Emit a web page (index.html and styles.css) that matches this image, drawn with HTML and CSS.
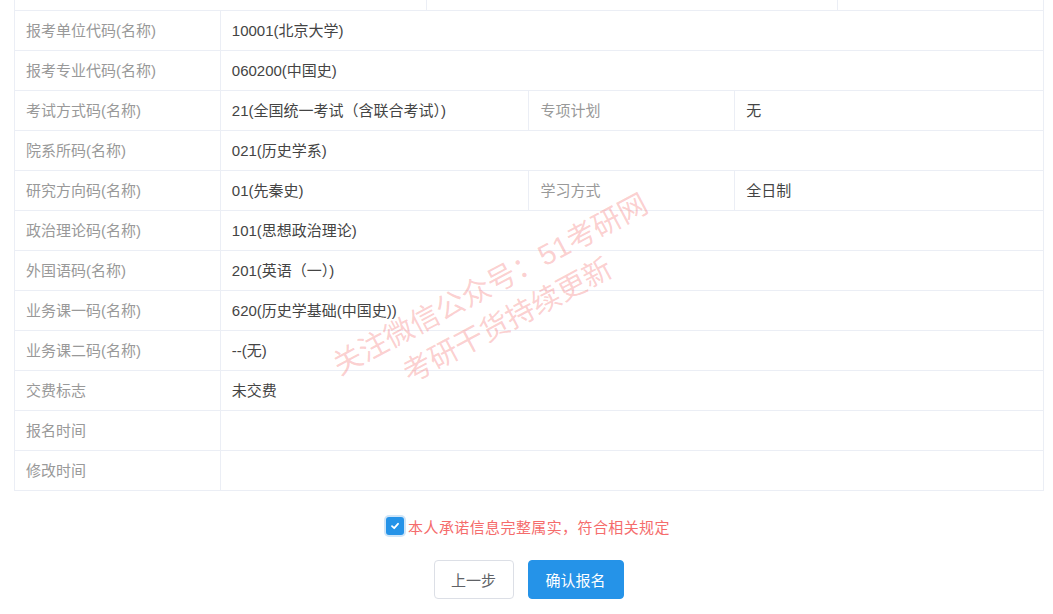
FILE: index.html
```html
<!DOCTYPE html>
<html lang="zh-CN">
<head>
  <meta charset="UTF-8" />
  <meta name="viewport" content="width=device-width, initial-scale=1.0"/>
  <title>报名信息确认</title>
  <link rel="stylesheet" href="styles.css">
</head>
<body>
  <div class="pagina">
    <table class="tabela tabela-topo">
      <tr>
        <td class="c40"></td>
        <td class="c40"></td>
        <td></td>
      </tr>
    </table>

    <table class="tabela info">
      <colgroup>
        <col class="c20"><col class="c30"><col class="c20"><col class="c30">
      </colgroup>
      <tr><td class="rotulo">报考单位代码(名称)</td><td colspan="3">10001(北京大学)</td></tr>
      <tr><td class="rotulo">报考专业代码(名称)</td><td colspan="3">060200(中国史)</td></tr>
      <tr>
        <td class="rotulo">考试方式码(名称)</td><td>21(全国统一考试（含联合考试）)</td>
        <td class="rotulo">专项计划</td><td>无</td>
      </tr>
      <tr><td class="rotulo">院系所码(名称)</td><td colspan="3">021(历史学系)</td></tr>
      <tr>
        <td class="rotulo">研究方向码(名称)</td><td>01(先秦史)</td>
        <td class="rotulo">学习方式</td><td>全日制</td>
      </tr>
      <tr><td class="rotulo">政治理论码(名称)</td><td colspan="3">101(思想政治理论)</td></tr>
      <tr><td class="rotulo">外国语码(名称)</td><td colspan="3">201(英语（一）)</td></tr>
      <tr><td class="rotulo">业务课一码(名称)</td><td colspan="3">620(历史学基础(中国史))</td></tr>
      <tr><td class="rotulo">业务课二码(名称)</td><td colspan="3">--(无)</td></tr>
      <tr><td class="rotulo">交费标志</td><td colspan="3">未交费</td></tr>
      <tr><td class="rotulo">报名时间</td><td colspan="3"></td></tr>
      <tr><td class="rotulo">修改时间</td><td colspan="3"></td></tr>
    </table>

    <label class="promessa">
      <span class="caixa">
        <svg width="10" height="10" viewBox="0 0 10 10"><path d="M2 5.2 L4.2 7.2 L8 2.8" fill="none" stroke="#fff" stroke-width="1.8" stroke-linecap="round" stroke-linejoin="round"/></svg>
      </span>
      本人承诺信息完整属实，符合相关规定
    </label>

    <div class="acoes">
      <button class="btn">上一步</button>
      <button class="btn btn-primario">确认报名</button>
    </div>

    <div class="marca">
      <div>关注微信公众号：51考研网</div>
      <div class="linha2">考研干货持续更新</div>
    </div>
  </div>
</body>
</html>
```

FILE: styles.css
```css
body {
  margin: 0;
  font-family: "Liberation Sans", "Noto Sans CJK SC", sans-serif;
  font-size: 15px;
  color: #444;
  background: #fff;
}
.pagina {
  position: relative;
  padding: 0 9px 0 14px;
  overflow: hidden;
  height: 614px;
}
.tabela {
  width: 100%;
  border-collapse: collapse;
  table-layout: fixed;
}
.tabela td {
  border: 1px solid #ebeef5;
  height: 40px;
  padding: 0 11px 2px;
  box-sizing: border-box;
  text-align: left;
}
.tabela-topo {
  margin-top: -30px;
}
.tabela-topo td {
  border-top: none;
}
.c40 { width: 40%; }
.c20 { width: 20%; }
.c30 { width: 30%; }
.info {
  margin-top: -1px;
}
.info td.rotulo {
  color: #999;
}
.promessa {
  display: flex;
  justify-content: center;
  align-items: center;
  gap: 4px;
  margin-top: 25px;
  color: #f56c6c;
  letter-spacing: 0.4px;
  padding-right: 2px;
}
.caixa {
  width: 18px;
  height: 18px;
  border-radius: 3px;
  background: #2593e8;
  box-shadow: 0 0 0 2px #cfe5f8;
  display: flex;
  align-items: center;
  justify-content: center;
}
.acoes {
  display: flex;
  justify-content: center;
  gap: 14px;
  margin-top: 23px;
  padding-right: 1px;
}
.btn {
  font-family: inherit;
  font-size: 15px;
  height: 39px;
  width: 80px;
  padding: 0;
  border: 1px solid #dcdfe6;
  border-radius: 4px;
  background: #fff;
  color: #606266;
  cursor: pointer;
}
.btn-primario {
  background: #2593e8;
  border-color: #2593e8;
  color: #fff;
  width: 96px;
}
.marca {
  position: absolute;
  left: 324px;
  top: 262px;
  transform: rotate(-28deg);
  color: rgba(245, 108, 108, 0.33);
  font-size: 29px;
  line-height: 40px;
  pointer-events: none;
  white-space: nowrap;
}
.marca .linha2 {
  padding-left: 58px;
}
```
